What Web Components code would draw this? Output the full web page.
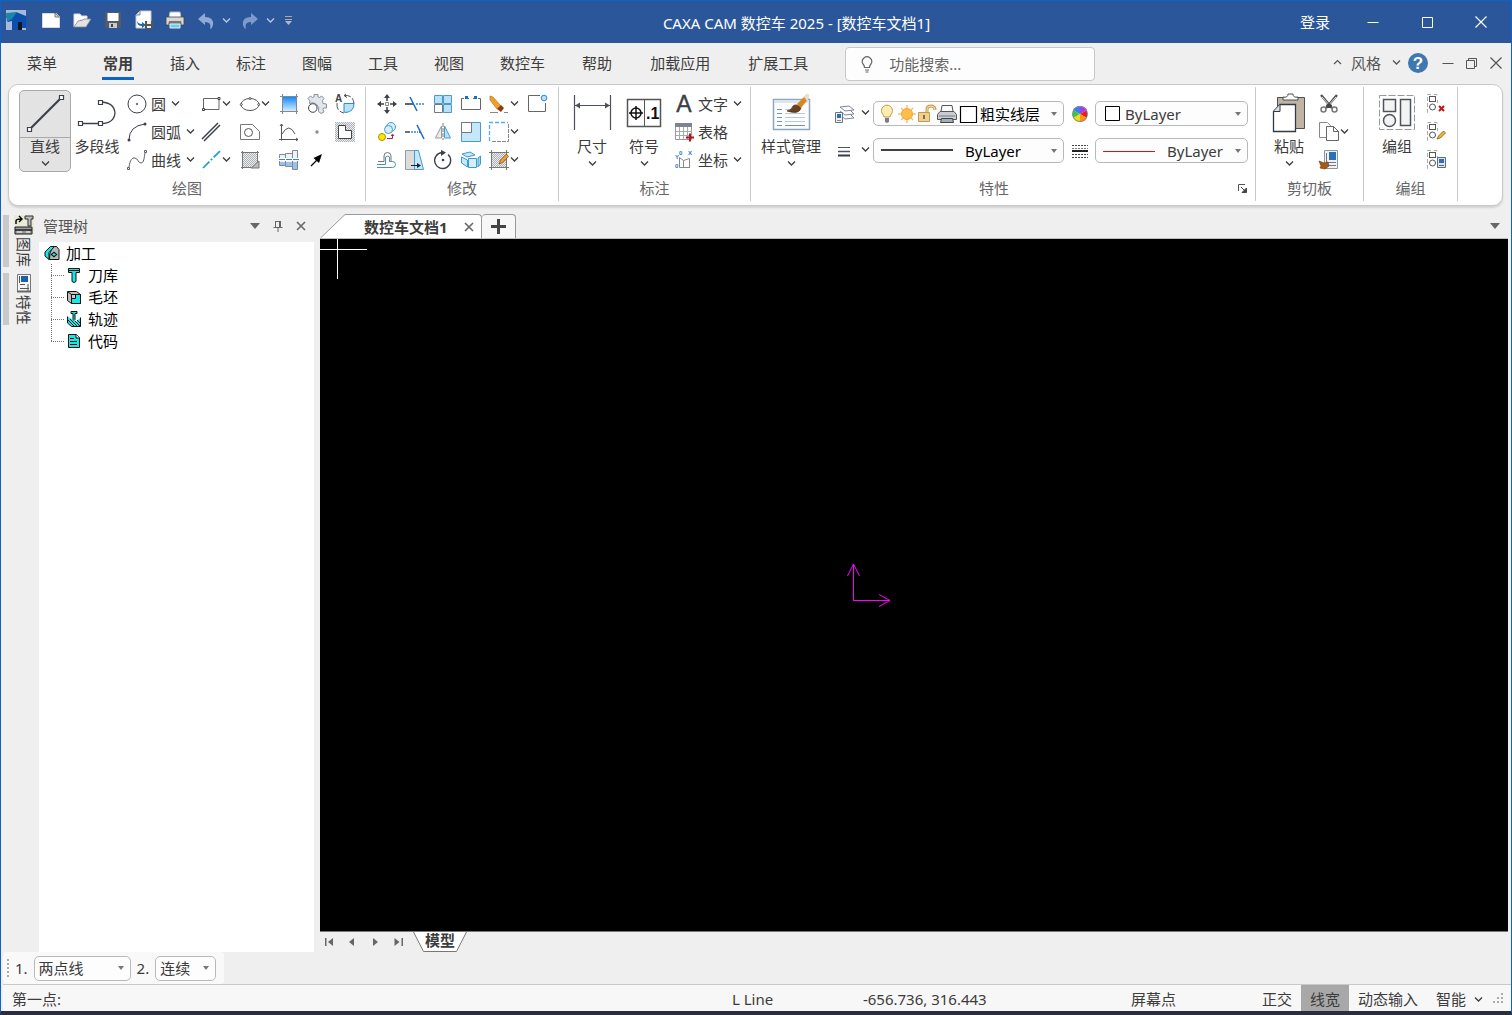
<!DOCTYPE html>
<html lang="zh-CN">
<head>
<meta charset="utf-8">
<title>CAXA CAM 数控车 2025</title>
<style>
    html, body {
        height: 100%;
        margin: 0;
    }

    body {
        font: 15px/20px "Noto Sans", "Noto Sans CJK SC", sans-serif;
        color: #3c3c3c;
        background: #efefef;
        overflow: hidden;
    }
</style>
</head>
<body>
<cam-window>
    <cam-titlebar slot="title" caption="CAXA CAM 数控车 2025 - [数控车文档1]"></cam-titlebar>
    <cam-menubar slot="menu"></cam-menubar>

    <cam-ribbon slot="ribbon">
        <ribbon-group label="绘图" pad="0 2px 0 10px">
            <big-button icon="line" label="直线" drop active></big-button>
            <big-button icon="pline" label="多段线"></big-button>
            <tool-grid after cols="74px 39px 39px 28px 28px 28px">
                <tool-button icon="circle" label="圆" drop></tool-button>
                <tool-button icon="rect" hint="矩形" drop></tool-button>
                <tool-button icon="ellipse" hint="椭圆" drop></tool-button>
                <tool-button icon="gradient" hint="渐变"></tool-button>
                <tool-button icon="gear" hint="齿轮"></tool-button>
                <tool-button icon="detail" hint="局部放大"></tool-button>
                <tool-button icon="arc" label="圆弧" drop></tool-button>
                <tool-button icon="parallel" hint="平行线"></tool-button>
                <tool-button icon="contour" hint="轮廓"></tool-button>
                <tool-button icon="formula" hint="公式曲线"></tool-button>
                <tool-button icon="point" hint="点"></tool-button>
                <tool-button icon="region" hint="区域"></tool-button>
                <tool-button icon="spline" label="曲线" drop></tool-button>
                <tool-button icon="centerline" hint="中心线" drop></tool-button>
                <tool-button icon="hatch" hint="剖面线"></tool-button>
                <tool-button icon="shaft" hint="轴"></tool-button>
                <tool-button icon="arrow" hint="箭头"></tool-button>
            </tool-grid>
        </ribbon-group>

        <ribbon-group label="修改" pad="0 2px 0 11px">
            <tool-grid cols="28px 28px 28px 28px 39px 28px">
                <tool-button icon="move" hint="平移"></tool-button>
                <tool-button icon="trim" hint="裁剪"></tool-button>
                <tool-button icon="array" hint="阵列"></tool-button>
                <tool-button icon="break" hint="打断"></tool-button>
                <tool-button icon="erase" hint="删除" drop></tool-button>
                <tool-button icon="corner" hint="过渡"></tool-button>
                <tool-button icon="copy" hint="平移复制"></tool-button>
                <tool-button icon="extend" hint="延伸"></tool-button>
                <tool-button icon="mirror" hint="镜像"></tool-button>
                <tool-button icon="scale" hint="缩放"></tool-button>
                <tool-button icon="explode" hint="分解" drop></tool-button>
                <span></span>
                <tool-button icon="offset" hint="等距线"></tool-button>
                <tool-button icon="stretch" hint="拉伸"></tool-button>
                <tool-button icon="rotate" hint="旋转"></tool-button>
                <tool-button icon="block" hint="块"></tool-button>
                <tool-button icon="hatchedit" hint="编辑剖面线" drop></tool-button>
            </tool-grid>
        </ribbon-group>

        <ribbon-group label="标注" pad="0 3px 0 7px">
            <big-button icon="dim" label="尺寸" drop></big-button>
            <big-button icon="symbol" label="符号" drop></big-button>
            <tool-grid after cols="73px">
                <tool-button icon="text" label="文字" drop></tool-button>
                <tool-button icon="table" label="表格"></tool-button>
                <tool-button icon="coord" label="坐标" drop></tool-button>
            </tool-grid>
        </ribbon-group>

        <ribbon-group label="特性" pad="0 7px 0 9px" launcher>
            <big-button icon="style" label="样式管理" drop wide></big-button>
            <prop-grid>
                <tool-button icon="layers" hint="图层" drop></tool-button>
                <cam-combo value="粗实线层" hint="图层" dark>
                    <cam-icon name="bulb"></cam-icon><cam-icon name="sun"></cam-icon><cam-icon name="lock"></cam-icon><cam-icon name="printer2"></cam-icon><cam-icon name="swatch"></cam-icon>
                </cam-combo>
                <cam-icon name="wheel"></cam-icon>
                <cam-combo value="ByLayer" hint="颜色"><cam-icon name="swatch2"></cam-icon></cam-combo>
                <tool-button icon="weights" hint="线宽" drop></tool-button>
                <cam-combo value="ByLayer" hint="线宽" dark><cam-icon name="thick"></cam-icon></cam-combo>
                <cam-icon name="linetypes"></cam-icon>
                <cam-combo value="ByLayer" hint="线型"><cam-icon name="thin"></cam-icon></cam-combo>
            </prop-grid>
        </ribbon-group>

        <ribbon-group label="剪切板" pad="0 8px 0 7px">
            <big-button icon="paste" label="粘贴" drop></big-button>
            <tool-grid after cols="36px">
                <tool-button icon="cut" hint="剪切"></tool-button>
                <tool-button icon="copydoc" hint="复制" drop></tool-button>
                <tool-button icon="match" hint="特性匹配"></tool-button>
            </tool-grid>
        </ribbon-group>

        <ribbon-group label="编组" pad="0 10px 0 7px">
            <big-button icon="group" label="编组"></big-button>
            <tool-grid after cols="20px">
                <tool-button icon="ungroup" hint="解除编组"></tool-button>
                <tool-button icon="groupedit" hint="编辑编组"></tool-button>
                <tool-button icon="groupmgr" hint="编组管理"></tool-button>
            </tool-grid>
        </ribbon-group>
    </cam-ribbon>

    <side-tabs slot="side">
        <side-tab icon="library">图库</side-tab>
        <side-tab icon="props">特性</side-tab>
    </side-tabs>

    <dock-panel slot="dock" caption="管理树">
        <tree-node icon="machining" label="加工">
            <tree-node child icon="tool" label="刀库"></tree-node>
            <tree-node child icon="stock" label="毛坯"></tree-node>
            <tree-node child icon="path" label="轨迹"></tree-node>
            <tree-node child last icon="code" label="代码"></tree-node>
        </tree-node>
    </dock-panel>

    <doc-view slot="view" caption="数控车文档1" sheet="模型"></doc-view>
    <command-bar slot="command"></command-bar>
    <status-bar slot="status"></status-bar>
</cam-window>

<script>
// Icon table: name -> [width, height, svg content]
const K = '#3b4049';
const HATCH = '<pattern id="h" width="2" height="2" patternUnits="userSpaceOnUse"><rect width="2" height="2" fill="#eceef0"/><path d="M0 0h1v1H0zM1 1h1v1H1z" fill="#adb0b5"/></pattern>';
const GROUPBASE = `<g fill="none"><path d="M4 .500H.500V18.500H3M7 .500h3v3M10.500 6v3" stroke="#aaa" stroke-dasharray="4 2"/><rect x="2.500" y="2.500" width="6" height="5" stroke="#555"/><circle cx="5.500" cy="13" r="3" stroke="#555"/></g>`;

const ICONS = {
    app: [20, 20, `<path d="M0 0h20v20H0z" fill="#a9b9dc"/><path d="M0 6 10 2l10 4v12h-4v-6h-4v8H6v-9l-4 1z" fill="#0a4fae"/><path d="M0 3 11 2 6 9 1 12z" fill="#1a86a8"/><path d="M12 12h4v8h-4z" fill="#15151c"/>`],
    new: [20, 20, `<path d="M1.500 3.500h14l3 3v11h-17z" fill="#fff" stroke="#d8d8d8"/><path d="M14 3v4h4.500z" fill="#dcdcdc" stroke="#777"/>`],
    open: [20, 20, `<path d="M2 17V4h6l1.500 2H15v4H8z" fill="#fff" stroke="#ddd"/><path d="M2 17 6 11l5-1 1-1h7l-5 8z" fill="#e3e3e3" stroke="#888" stroke-width=".8"/>`],
    save: [20, 20, `<path d="M2 2h16v16H4l-2-2z" fill="#555b66"/><path d="M4.500 3h11v8h-11z" fill="#fff"/><path d="M6 13h8v5H6z" fill="#c9c9c9"/><path d="M8 14h2v3H8z" fill="#444"/>`],
    saveas: [20, 20, `<path d="M2 5 6 1h11v17H2z" fill="#fff" stroke="#c9c9c9"/><path d="M2 5h4V1" fill="#ddd" stroke="#888"/><path d="M3 11q1 3 5 3v-2l4 3-4 3v-2q-5 0-5-5" fill="#2363ab"/><path d="M11 11h8v8h-8z" fill="#555"/><path d="M13 11h4v3h-4zM13 16h4v2h-4z" fill="#eee"/>`],
    print: [20, 20, `<path d="M5 2h10l1 6H4z" fill="#fff" stroke="#bbb"/><path d="M1 7h18v8H1z" fill="#d7d7d7" stroke="#444" stroke-width=".8"/><path d="M4 11h12l1 4H3z" fill="#777"/><path d="M5 14h10v4H5z" fill="#5fd2f5" stroke="#eee"/>`],
    undo: [20, 20, `<path d="m2 9 7-6v4q9 0 8 8-.5 3-3 4 2-7-5-7v3z" fill="#8fa9d4"/>`],
    redo: [20, 20, `<path d="m18 9-7-6v4q-9 0-8 8 .5 3 3 4-2-7 5-7v3z" fill="#7f9ac8"/>`],
    more: [9, 12, `<path d="M1 2.500h7M1 5.500h7" stroke="#a9a9a9" fill="none"/><path d="M1 7h7l-3.500 4z" fill="#b9b9b9"/>`],
    chev: [9, 9, `<path d="m1 2.500 3.500 3.500L8 2.500" fill="none" stroke="currentColor" stroke-width="1.300"/>`],
    chevup: [9, 9, `<path d="M1 6l3.500-3.500L8 6" fill="none" stroke="currentColor" stroke-width="1.200"/>`],
    tri: [6, 4, `<path d="M0 0h6L3 4z" fill="#777"/>`],
    bigtri: [10, 6, `<path d="M0 0h10L5 6z" fill="#666"/>`],
    min: [12, 12, `<path d="M.500 6.500h11" stroke="currentColor"/>`],
    max: [12, 12, `<path d="M1.500 1.500h10v10h-10z" fill="none" stroke="currentColor"/>`],
    close: [12, 12, `<path d="m.500.500 11 11M11.500.500l-11 11" stroke="currentColor" stroke-width="1.200"/>`],
    restore: [12, 12, `<path d="M.500 3.500h8v8h-8zM2.500 3V1.500h8v8H9" fill="none" stroke="currentColor"/>`],
    help: [20, 20, `<circle cx="10" cy="10" r="10" fill="#3f77b0"/><text x="10" y="16" text-anchor="middle" font-family="Liberation Sans" font-weight="bold" font-size="17" fill="#fff">?</text>`],
    hint: [14, 18, `<path d="M4.500 12.500q0-2-1.500-3.500A4.700 4.700 0 1 1 11 9q-1.500 1.500-1.500 3.500zM5 15h4M5.500 17h3" fill="none" stroke="#666" stroke-width="1.200"/>`],
    launcher: [11, 11, `<path d="M1.500 8V1.500H8" fill="none" stroke="#555"/><path d="m4 4 4 4M9.500 5v4.500H5z" stroke="#444" fill="#444"/>`],

    line: [40, 40, `<path d="M5 36 36 5" stroke="${K}" stroke-width="2.200"/><path d="M2.500 34.500h4v4h-4zM34.500 2.500h4v4h-4z" fill="#fff" stroke="${K}" stroke-width="1.200"/>`],
    pline: [40, 40, `<path d="M4 30.500h20q13 0 14-10.500-1-11-15-11" fill="none" stroke="${K}" stroke-width="1.300"/><path d="M1.500 28.500h4v4h-4zM21.500 28.500h4v4h-4zM21.500 7.500h4v4h-4z" fill="#fff" stroke="${K}" stroke-width="1.200"/>`],
    circle: [20, 20, `<circle cx="10" cy="10" r="9" fill="none" stroke="${K}"/><circle cx="10" cy="10" r="1.200" fill="#777"/>`],
    arc: [20, 20, `<path d="M2 18Q2 4 18 2" fill="none" stroke="${K}"/><circle cx="2" cy="18" r="1.500" fill="${K}"/><circle cx="18" cy="2" r="1.500" fill="${K}"/>`],
    spline: [20, 20, `<path d="M2 17C3 10 5 7.500 8 8s3 5 6 5 3-5 4-10" fill="none" stroke="#5a5f66"/><path d="M.500 17.500h2v2h-2zM17.500.500h2v2h-2z" fill="#fff" stroke="#5a5f66"/>`],
    rect: [20, 20, `<path d="M2.500 4.500h15.500v11H2.500z" fill="#fff" stroke="#666"/><path d="M1.500 14.500h2v2h-2zM17 3.500h2v2h-2z" fill="#fff" stroke="${K}"/>`],
    ellipse: [20, 20, `<ellipse cx="10" cy="10.500" rx="9" ry="6" fill="none" stroke="#555"/><g fill="#fff" stroke="#555"><circle cx="10" cy="4.500" r="1"/><circle cx="1.300" cy="10.500" r="1"/><circle cx="18.700" cy="10.500" r="1"/></g>`],
    gradient: [20, 20, `<linearGradient id="g" x2="0" y2="1"><stop stop-color="#1289ff"/><stop offset="1" stop-color="#d5edff"/></linearGradient><path d="M1 2.500h18M1 17.500h18M3.500 0v20M17.500 0v20" stroke="#888"/><path d="M4 3h13v14H4z" fill="url(#g)"/>`],
    gear: [20, 20, `<path d="M1 4.500 3.500 2l2 1.500L7 3V.500h4V3l1.500.500L14.500 2 17 4.500 15.500 6.500l.500 3 3.500.500v4h-3l-.500 1.500 1 2.500-3 1.500-2.500-2A6.500 6.500 0 0 0 2.500 9.500L3 7z" fill="#e1e5ec" stroke="#8a919c"/><circle cx="5.800" cy="14" r="4.300" fill="#fff" stroke="${K}"/>`],
    detail: [20, 20, `<path d="M9 9.500h10q0 8-8 9l-2-.5z" fill="#b9e1f8" stroke="#2d8ccb"/><path d="M9 1.500q9-1 10 8M2 9q-1 8 7 10M9 1.500l2-1.500M9 1.500l3 2" fill="none" stroke="#555" stroke-dasharray="7 2"/><text x="0" y="8" font-family="Liberation Sans" font-weight="bold" font-size="10" fill="${K}">A</text>`],
    parallel: [20, 20, `<path d="M1 17 17 1M3 19 19 3" stroke="${K}" stroke-width="1.500"/>`],
    contour: [20, 20, `<path d="M.500 2.500h12l7 7v8h-19z" fill="#fff" stroke="#777"/><circle cx="8.500" cy="10.500" r="4" fill="none" stroke="#555"/>`],
    formula: [20, 20, `<path d="M2.500 2v16.500M0 17.500h19M1 4l1.500-2L4 4M17 16l2 1.500-2 1.500M3 12q7-12 13 0" fill="none" stroke="#555"/>`],
    point: [20, 20, `<circle cx="10" cy="10" r="1.700" fill="#8c8c8c"/>`],
    region: [20, 20, `${HATCH}<path d="M0 0h20v20H0z" fill="url(#h)"/><path d="M3.500 3.500h7v5h6v8h-13z" fill="#fff" stroke="#444"/>`],
    centerline: [20, 20, `<path d="M2 18 19 1" stroke="#1a9be6" stroke-width="1.700" stroke-dasharray="9 2 2 2"/>`],
    hatch: [20, 20, `${HATCH}<path d="M3 3h14v10l-5 4H3z" fill="url(#h)"/><path d="M1 2.500h18M2.500 1v18M17.500 1v12M1 17.500h10" fill="none" stroke="#777"/><path d="M11 18l8-7v7z" fill="#bbb" stroke="#777"/>`],
    shaft: [20, 20, `<path d="M.500 4.500h6v11h-6zM6.500 3.500h7v13h-7zM13.500.500h5v19h-5z" fill="#eef2f7" stroke="#7e8b9b"/><path d="M1 12h5v3H1zM7 12h6v4H7zM14 12h4v7h-4z" fill="#9dbfea"/><path d="M0 9.500h20" stroke="#fff" stroke-width="3"/><path d="M0 9.500h20" stroke="#3c7edb" stroke-dasharray="6 1"/>`],
    arrow: [20, 20, `<path d="m4 16 7-7" stroke="#000" stroke-width="1.300"/><path d="m15 4-8.500 4L12 13z"/>`],

    move: [20, 20, `<path d="M10 2v5M10 13v5M2 10h5M13 10h5" stroke="${K}" stroke-width="1.500"/><path d="m10 0 3 4H7zM10 20l3-4H7zM0 10l4-3v6zM20 10l-4-3v6z" fill="${K}"/><path d="M8.500 8.500h3v3h-3z" fill="#fff" stroke="#888"/>`],
    trim: [20, 20, `<path d="M0 10h8" stroke="${K}" stroke-width="1.600"/><path d="m5 3 7 14" stroke="#146fd0" stroke-width="1.500"/><path d="M11 10h9" stroke="#2d8ccb" stroke-width="1.500" stroke-dasharray="2 1"/>`],
    array: [20, 20, `<g fill="#b9e1f8" stroke="#4b9acb"><path d="M1.500 1.500h8v8h-8zM10.500 1.500h8v8h-8zM10.500 10.500h8v8h-8z"/></g><path d="M1.500 10.500h8v8h-8z" fill="#fff" stroke="#777"/>`],
    break: [20, 20, `<path d="M3 4.500H.500v11h19v-11H17M7 4.500h1M13 4.500h-1" fill="none" stroke="#666"/><path d="M4 2h3v3H4zM13 2h3v3h-3z" fill="#146fd0"/>`],
    erase: [20, 20, `<path d="m1 2 3 1 8 9-4 3-7-9z" fill="#f0a029" stroke="#a9690d" stroke-width=".6"/><path d="m12 11 3 3-3 4-4-3z" fill="#8d3c17"/><path d="M1 18.500h8M15 18.500h4" stroke="#888"/>`],
    corner: [20, 20, `<path d="M12 1.500H.500v16h17V9" fill="none" stroke="#666"/><circle cx="16" cy="4" r="2.800" fill="#b9e1f8" stroke="#2d8ccb"/>`],
    copy: [20, 20, `<circle cx="14" cy="5" r="4.500" fill="#d6eefc" stroke="#4b9acb"/><circle cx="11.500" cy="7.500" r="4" fill="#d6eefc" stroke="#4b9acb"/><circle cx="5" cy="15" r="3.500" fill="#ffe600" stroke="#a39300"/><path d="M10 16.500h5.500V13M14 14l1.500-2 1.500 2" fill="none" stroke="#a02a3a"/>`],
    extend: [20, 20, `<path d="M0 10h5M14 10h2" stroke="${K}" stroke-width="1.600"/><path d="M6 10h7" stroke="#2d8ccb" stroke-width="1.500" stroke-dasharray="2 1"/><path d="m12 3 7 14" stroke="#146fd0" stroke-width="1.500"/>`],
    mirror: [20, 20, `<path d="M8.500 4v12h-6z" fill="#eee" stroke="#999"/><path d="M11.500 4v12h6z" fill="#b9e1f8" stroke="#4b9acb"/><path d="M10 1v17" stroke="#777" stroke-dasharray="4 1"/>`],
    scale: [20, 20, `<path d="M.500.500h19v19H.500z" fill="#c5e7fa" stroke="#4b9acb"/><path d="M.500.500h10v10H.500z" fill="#fff" stroke="#777"/>`],
    explode: [20, 20, `<path d="M.500 19V.500H19" fill="none" stroke="#4bb0ea" stroke-width="1.300" stroke-dasharray="4 2"/><path d="M19.500 2v17.500H2" fill="none" stroke="#888" stroke-dasharray="4 1"/>`],
    offset: [20, 20, `<path d="M1 11.500h6V6a3.500 3.500 0 0 1 7 0v5.500" fill="none" stroke="#777"/><path d="M0 14.500h8.500V7q2-2 4 0v4.500h3q3 0 3 3t-3 3H0" fill="none" stroke="#4b8fc4"/>`],
    stretch: [20, 20, `<path d="M.500.500h9v19h-9z" fill="#dcdcdc" stroke="#999"/><path d="M9.500.500h4l5 19h-9z" fill="#c5e7fa" stroke="#4b9acb"/><path d="M6 15.500h8" stroke="#222"/><path d="m12 13 4 2.500-4 2.500z" fill="#222"/>`],
    rotate: [20, 20, `<path d="M9 2.500a8 8 0 1 0 6 2" fill="none" stroke="${K}" stroke-width="1.400"/><path d="m8 0 5 2.500L8 6z" fill="${K}"/><circle cx="10" cy="10" r="1.300" fill="${K}"/>`],
    block: [20, 20, `<path d="m1 4 8-2 5 3-8 2zM.500 7l6 3v7l-6-4z" fill="#c5e7fa" stroke="#3b9bd0"/><path d="M7.500 8.500h8v9h-8z" fill="#d6eefc" stroke="#3b9bd0"/><path d="m17 8 2.500-2v8L17 17z" fill="#a5d6f2" stroke="#3b9bd0"/>`],
    hatchedit: [20, 20, `${HATCH}<path d="M3 3h14v14H3z" fill="url(#h)"/><path d="M0 2.500h20M2.500 0v20M17.500 0v20M0 17.500h20" stroke="#777"/><path d="m10 14 1.500-4 6-6 2 2.500-6 6z" fill="#f0a029" stroke="#8d3c17" stroke-width=".7"/>`],

    dim: [40, 40, `<path d="M2.500 2v35M38.500 2v35M3 12.500h35" stroke="#4d525a" stroke-width="1.200"/><path d="m3 12.500 5-3v6zM38 12.500l-5-3v6z" fill="#4d525a"/>`],
    symbol: [40, 40, `<path d="M3.500 6.500h33v27h-33z" fill="#fff" stroke="#555" stroke-width="1.500"/><path d="M20.500 6v28" stroke="#555"/><circle cx="12" cy="20" r="5" fill="none" stroke="#111" stroke-width="1.500"/><path d="M5 20h14M12 13v14" stroke="#111" stroke-width="1.500"/><text x="22" y="26" font-family="Liberation Sans" font-weight="bold" font-size="16" fill="#111">.1</text>`],
    text: [20, 20, `<text x="10" y="18" text-anchor="middle" font-family="Liberation Sans" font-size="23" fill="${K}" stroke="${K}" stroke-width=".4">A</text>`],
    table: [20, 20, `<path d="M1.500 1.500h16v16h-16z" fill="#fff" stroke="#999"/><path d="M1 1h17v4H1z" fill="#7b8490"/><path d="M2 9.500h16M2 13.500h16M5.500 5v12M9.500 5v12M13.500 5v12" stroke="#aaa"/><path d="M12 15.500h8M16 11.500v8" stroke="#b3141d" stroke-width="2"/>`],
    coord: [20, 20, `<path d="M5.500 7.500v10H16M5.500 7.500l4 3v7M9.500 10.500l6-2v9" fill="none" stroke="#888"/><g font-family="Liberation Sans" font-weight="bold" font-size="6" fill="#2277cf"><text x="1" y="9">Y</text><text x="5" y="5">0</text><text x="14" y="5">X</text><text x="1" y="18">0</text></g>`],
    style: [40, 40, `<path d="M2.500 6.500h36v30h-36z" fill="#fbfdff" stroke="#8fa6bb" stroke-width="1.500"/><path d="M3 8.500h35" stroke="#dbe5ee" stroke-width="3"/><path d="M6 16.500h5M6 20.500h5M6 24.500h5M6 28.500h5M6 32.500h5M14 32.500h20" stroke="#7494ad"/><path d="M14 20.500h20M14 24.500h20M14 28.500h20M14 16.500h4" stroke="#bccad6"/><path d="M16 18q5-1 6-5 4-3 8 2-2 7-14 3" fill="#6b4220" stroke="#3d2410" stroke-width=".7"/><path d="M26 11 36 1h2v4l-8 10z" fill="#d98522"/><path d="m33 4 3-3h2v4l-2 3z" fill="#eadfd0"/>`],

    // these two sit in the 27px wide buttons before the combos
    layers: [26, 20, `<path d="m6 3 9-1 5 4-9 1zM6 7l5 4 9-1-3-3M6 11l5 4 9-1-3-3" fill="#fff" stroke="#7d8794"/><path d="M1.500 8.500h7v10h-7z" fill="#eef2f6" stroke="#66768a"/><path d="M3 10h4v4H3z" fill="#2c6fb5"/><path d="M3 16.500h4" stroke="#888"/>`],
    weights: [26, 20, `<path d="M4 6.500h12" stroke="#555"/><path d="M4 10.500h12" stroke="#4a5360" stroke-width="1.500"/><path d="M4 14.500h12" stroke="#333b47" stroke-width="2"/>`],
    bulb: [18, 20, `<path d="M5 13q0-2-2-4A5.500 5.500 0 1 1 13 9q-2 2-2 4z" fill="#fbeeb0" stroke="#c39b3c"/><path d="M6 14h4v4l-2 1-2-1z" fill="#777e88"/>`],
    sun: [20, 20, `<path d="M10 1v18M1 10h18M4 4l12 12M16 4 4 16" stroke="#f2c377" stroke-width="1.500"/><circle cx="10" cy="10" r="5.500" fill="#ffbd4a" stroke="#f0a63a"/>`],
    lock: [20, 20, `<path d="M10 9V5q0-3 4-3t4 4" fill="none" stroke="#c9a04a" stroke-width="3"/><path d="M10 9V5q0-3 4-3t4 4" fill="none" stroke="#f4deb0"/><path d="M1.500 8.500h11v9h-11z" fill="#f0cf91" stroke="#c29b52"/><path d="M6 11h2v4H6z" fill="#8b6f32"/>`],
    printer2: [22, 20, `<path d="M5 1.500h10l1 6H4z" fill="#fafafa" stroke="#555"/><path d="m3 7.500 14 0 2.500 3v5H.500v-5z" fill="#c9cdd2" stroke="#555"/><path d="M2 11h16v2H2z" fill="#9fa5ad"/><path d="M4.500 14.500h11l1 4h-13z" fill="#9fb0bb" stroke="#444"/>`],
    swatch: [21, 20, `<path d="M1.500 2.500h16v16h-16z" fill="#fff" stroke="#000" stroke-width="1.200"/>`],
    swatch2: [16, 20, `<path d="M.500 2.500h14v14h-14z" fill="#fff" stroke="#000"/>`],
    thick: [80, 20, `<path d="M0 9h72" stroke="#3f3f3f" stroke-width="2"/>`],
    thin: [60, 20, `<path d="M0 10.500h52" stroke="#e01010"/>`],
    wheel: [16, 16, `<path d="M8 8V0a8 8 0 0 1 7 4z" fill="#a23cf0"/><path d="m8 8 7-4v8z" fill="#f01818"/><path d="m8 8 7 4a8 8 0 0 1-7 4z" fill="#ff9415"/><path d="M8 8v8a8 8 0 0 1-7-4z" fill="#f4d91b"/><path d="m8 8-7 4V4z" fill="#3cc63c"/><path d="M8 8 1 4a8 8 0 0 1 7-4z" fill="#3f7af5"/><circle cx="8" cy="8" r="7.500" fill="none" stroke="#888"/>`],
    linetypes: [16, 14, `<path d="M0 1.500h16" stroke="#444" stroke-dasharray="2 1"/><path d="M0 4.500h16" stroke="#777" stroke-dasharray="2 1"/><path d="M0 7h16" stroke="#222" stroke-width="2"/><path d="M0 10.500h16M0 13.500h16" stroke="#444" stroke-dasharray="2 1"/>`],

    paste: [40, 40, `<path d="M8.500 4.500h27v31h-27z" fill="#bfb4a3" stroke="#4b4f56"/><path d="M14 7V4q5 1 5-3h5q0 4 5 3v3z" fill="#fff" stroke="#4b4f56"/><path d="M4.500 18.500 11 11.500h15.500v27h-22z" fill="#fff" stroke="#333a44" stroke-width="1.300"/><path d="M4.500 18.500H11v-7" fill="#ddd" stroke="#333a44"/>`],
    cut: [20, 20, `<path d="m2 1 11 13M18 1 7 14" stroke="#555" stroke-width="2.500"/><path d="m3 3 9 10M17 3 8 13" stroke="#ddd"/><path d="m7 11 3-2 3 2-1 3H8z" fill="#444"/><circle cx="4.500" cy="15.500" r="2.500" fill="none" stroke="#777" stroke-width="1.500"/><circle cx="15.500" cy="15.500" r="2.500" fill="none" stroke="#777" stroke-width="1.500"/>`],
    copydoc: [20, 20, `<path d="M.500.500h8l3 3v12H.500z" fill="#fff" stroke="#888"/><path d="M7.500 4.500h7l5 5v9h-12z" fill="#fff" stroke="#666"/><path d="M14.500 4.500v5h5" fill="none" stroke="#666"/>`],
    match: [20, 20, `<path d="M5.500.500h13v18h-13z" fill="#eef2f6" stroke="#8797a8"/><path d="M10 2h7v8h-7z" fill="#2c6fb5"/><path d="M7.500 3v12M8 12.500h9M8 15.500h9" stroke="#777"/><path d="m0 11 5 2 4-1 1 4-4 3-5-1 1-2z" fill="#a85a16" stroke="#6b3508" stroke-width=".6"/>`],
    group: [40, 40, `<path d="M2.500 2.500h35v34h-35z" fill="none" stroke="#999" stroke-dasharray="7 2"/><g fill="#f3f3f3" stroke="#4d535c" stroke-width="1.500"><path d="M6.500 6.500h12v12h-12zM23.500 6.500h10v26h-10z"/><circle cx="12.500" cy="27.500" r="6"/></g>`],
    ungroup: [20, 20, `${GROUPBASE}<path d="m12 12 5 5M17 12l-5 5" stroke="#c01818" stroke-width="2"/>`],
    groupedit: [20, 20, `${GROUPBASE}<path d="m10 17 1.500-3 5-5 2 2-5 5z" fill="#f3b52d" stroke="#6b4c12" stroke-width=".7"/>`],
    groupmgr: [20, 20, `${GROUPBASE}<path d="M10.500 7.500h8v10h-8z" fill="#dce4ec" stroke="#5c6c80"/><path d="M12 9h5v4h-5z" fill="#2c6fb5"/><path d="M12 15.500h5" stroke="#666"/>`],

    library: [20, 20, `<path d="M0 0h20v20H0z" fill="#e9ead6"/><path d="M2 9V6q0-2 5-2M5 1l3 3-3 3" fill="none" stroke="#000" stroke-width="1.400"/><path d="M11 1h8v3h-2v7h-3V4h-3z" fill="#bbb" stroke="#333"/><path d="M1 12h17v3H1zM1 15h17v4H1z" fill="#999" stroke="#222"/><path d="M3 17h5M12 17h4" stroke="#fff"/>`],
    props: [20, 20, `<path d="M3.500 1.500h13v17h-13z" fill="#f4f6f8" stroke="#777"/><path d="M7 3h7v6H7z" fill="#1d5fae"/><path d="M5.500 3v7M6 11.500h5M6 15.500h9M14 11v7" stroke="#555"/><path d="M3 18.500h14" stroke="#666" stroke-width="2"/>`],
    pin: [10, 12, `<path d="M2.500 1v6M3 1.500h5M7.500 1v6M6.500 1v6M.500 7.500h9M5 8v4" fill="none" stroke="#666"/>`],
    machining: [16, 16, `<path d="m6 8 3-6.500h3.500l2.500 3v10H5.500z" fill="#b8b8b8" stroke="#111"/><path d="m1 7 5.500-5.500h4L5 7.500v7L1 11z" fill="#19e6e6" stroke="#111"/><path d="m10 6.500 3.500 3-3.500 3-3.500-3z" fill="#111"/><path d="m10 8 2 1.500-2 1.500-2-1.500z" fill="#19e6e6"/>`],
    tool: [16, 16, `<path d="M2.500 1.500h11v4H10v9l-2 1-2-1v-9H2.500z" fill="#19e6e6" stroke="#111"/><path d="M3 3.500h10" stroke="#111"/>`],
    stock: [16, 16, `<path d="M1.500 2.500h9l4 3v9h-9l-4-3z" fill="#c0c0c0" stroke="#111"/><path d="M5.500 5.500h9v9h-9z" fill="#19e6e6" stroke="#111"/><path d="M2 3l3.500 2.500M5.500 5.500h4v4h-4z" fill="#ccc" stroke="#111"/>`],
    path: [16, 16, `<path d="M1.500 5.500V12l4 3.500h9v-9L10 11z" fill="#19e6e6"/><path d="M1.500 5.500V12l4 3.500h9v-9" fill="none" stroke="#111"/><path d="m2 9 6 6M4 8l7 7M9 10l5 5M11 9l3 3" stroke="#111"/><path d="M5 .500h6v2H9v6l-1 1-1-1v-6H5z" fill="#19e6e6" stroke="#111"/>`],
    code: [16, 16, `<path d="M2.500 1.500h8l3 3v10h-11z" fill="#19e6e6" stroke="#111"/><path d="M10 1v4h3.500" fill="#fff" stroke="#111"/><path d="M4 5.500h4M4 8.500h7M4 11.500h7" stroke="#111"/>`],
    twig: [14, 22, `<path d="M.500 0v22M0 11.500h14" stroke="#777" stroke-dasharray="1 1"/>`],
    twigend: [14, 22, `<path d="M.500 0v12M0 11.500h14" stroke="#777" stroke-dasharray="1 1"/>`],
    x: [10, 10, `<path d="m1 1 8 8M9 1 1 9" stroke="#666" stroke-width="1.600"/>`],
    plus: [15, 15, `<path d="M7.500 0v15M0 7.500h15" stroke="#444" stroke-width="3"/>`],
    slant: [26, 24, `<path d="M0 24 25 .500h1V24z" fill="#fff"/><path d="M.500 24 25 .500h1" fill="none" stroke="#999" stroke-linejoin="bevel"/>`],
    sheetl: [11, 20, `<path d="M0 0 10 19.500h1V0z" fill="#fff"/><path d="m.500 0 10 19.500h1" fill="none" stroke="#777"/>`],
    sheetr: [11, 20, `<path d="M11 0 1 19.500H0V0z" fill="#fff"/><path d="m10.500 0-10 19.500h-1" fill="none" stroke="#777"/>`],
    first: [10, 10, `<path d="M1 1h1.500v8H1zM9 1v8L4 5z" fill="#666"/>`],
    prev: [10, 10, `<path d="M7 1v8L2 5z" fill="#666"/>`],
    next: [10, 10, `<path d="M3 1v8l5-4z" fill="#666"/>`],
    last: [10, 10, `<path d="M8.500 1H10v8H8.500zM1.500 1v8l5-4z" fill="#666"/>`],
    grip: [2, 18, `<path d="M1 0v18" stroke="#aaa" stroke-width="2" stroke-dasharray="2 2"/>`],
    sizer: [12, 12, `<path d="M9 1h2v2H9zM9 5h2v2H9zM9 9h2v2H9zM5 5h2v2H5zM5 9h2v2H5zM1 9h2v2H1z" fill="#aaa"/>`],
    cross: [48, 40, `<path d="M0 10.500h47M17.500 0v40" stroke="#fff"/>`],
    ucs: [46, 46, `<path d="M7.500 38.500v-36M1.500 14l6-12 6 12M7 38.500h37M33 32.500l11 6-11 6" fill="none" stroke="#f0f"/>`]
};

const BASE = `
    *, *::before { box-sizing: border-box; }
    button { font: inherit; color: inherit; background: none; border: 0; padding: 0; margin: 0; }
    button:hover { background-color: rgba(120, 160, 210, .25); }
`;

class CamElement extends HTMLElement {
    constructor() {
        super();
        this.shadow = this.attachShadow({mode: "open"});
    }

    connectedCallback() {
        this.shadow.innerHTML = `<style>${BASE}${this.styles()}</style>${this.render()}`;
    }

    attr(name) {
        return this.getAttribute(name) || "";
    }

    styles() { return ""; }
    render() { return "<slot></slot>"; }
}

const icon = (name) => `<cam-icon name="${name}"></cam-icon>`;

customElements.define("cam-icon", class extends CamElement {
    styles() {
        return `:host { display: block; flex: none; } svg { display: block; overflow: visible; }`;
    }
    render() {
        const [w, h, body] = ICONS[this.attr("name")];
        return `<svg width="${w}" height="${h}" viewBox="0 0 ${w} ${h}" aria-hidden="true">${body}</svg>`;
    }
});

customElements.define("cam-window", class extends CamElement {
    styles() {
        return `
            :host {
                display: flex;
                flex-direction: column;
                height: 100vh;
                border: 1px solid #0a63c6;
                border-bottom: 4px solid #2a2d3e;
                box-sizing: border-box;
            }
            .work { flex: 1; display: flex; min-height: 0; padding: 3px 3px 0 0; }
            ::slotted([slot=view]) { flex: 1; margin-left: 6px; }
        `;
    }
    render() {
        return `
            <slot name="title"></slot>
            <slot name="menu"></slot>
            <slot name="ribbon"></slot>
            <div class="work"><slot name="side"></slot><slot name="dock"></slot><slot name="view"></slot></div>
            <slot name="command"></slot>
            <slot name="status"></slot>
        `;
    }
});

customElements.define("cam-titlebar", class extends CamElement {
    styles() {
        return `
            :host { display: flex; flex: none; height: 42px; align-items: center; background: #2b579a; color: #fff; padding-right: 3px; }
            .quick { display: flex; align-items: center; align-self: flex-start; height: 38px; padding-left: 5px; color: #b9c7e0; }
            .quick button { display: block; }
            .quick .b { margin-left: 11px; }
            .quick .c { margin-left: 6px; }
            .quick .c + .b { margin-left: 9px; }
            .logo { margin-right: 4px; }
            h1 { flex: 1; margin: 0; padding-top: 2px; font-size: 15px; font-weight: normal; text-align: center; }
            .login { margin-right: 16px; }
            .win { width: 54px; height: 42px; display: grid; place-items: center; }
        `;
    }
    render() {
        return `
            <div class="quick">
                <span class="logo">${icon("app")}</span>
                ${["new", "open", "save", "saveas", "print", "undo"].map(n => `<button class="b" aria-label="${n}">${icon(n)}</button>`).join("")}
                <button class="c" aria-label="undo list">${icon("chev")}</button>
                <button class="b" aria-label="redo">${icon("redo")}</button>
                <button class="c" aria-label="redo list">${icon("chev")}</button>
                <button class="b" aria-label="customize">${icon("more")}</button>
            </div>
            <h1>${this.attr("caption")}</h1>
            <button class="login">登录</button>
            ${["min", "max", "close"].map(n => `<button class="win" aria-label="${n}">${icon(n)}</button>`).join("")}
        `;
    }
});

customElements.define("cam-menubar", class extends CamElement {
    styles() {
        return `
            :host { display: flex; flex: none; height: 41px; align-items: center; padding: 0 9px 0 8px; }
            nav { display: flex; padding-bottom: 2px; }
            nav button { padding: 0 18px; height: 36px; }
            nav button:first-child { margin-right: 9px; }
            nav button:nth-child(n+9) { padding: 0 19px; }
            .on { font-weight: bold; }
            .on span { display: block; width: 32px; line-height: 28px; padding-top: 4px; border-bottom: 3px solid #0a63c6; }
            label {
                display: flex; align-items: center; width: 250px; height: 34px; margin-left: 18px; padding-left: 14px;
                background: #fdfdfd; border: 1px solid #c8c8c8; border-radius: 4px;
            }
            input { flex: 1; min-width: 0; border: 0; outline: 0; background: none; font: inherit; margin-left: 15px; padding: 0; }
            input::placeholder { color: #666; opacity: 1; }
            .right { margin-left: auto; display: flex; align-items: center; gap: 7px; color: #555; padding-bottom: 2px; }
            .right .mdi { margin-left: 7px; }
            .right .mdi + .mdi { margin-left: 5px; }
            .skin { display: flex; align-items: center; gap: 11px; margin-left: 2px; }
        `;
    }
    render() {
        const items = ["菜单", "常用", "插入", "标注", "图幅", "工具", "视图", "数控车", "帮助", "加载应用", "扩展工具"];
        return `
            <nav>${items.map(t => t === "常用" ? `<button class="on"><span>${t}</span></button>` : `<button>${t}</button>`).join("")}</nav>
            <label>${icon("hint")}<input type="search" placeholder="功能搜索..." aria-label="功能搜索"></label>
            <div class="right">
                <button aria-label="collapse">${icon("chevup")}</button>
                <button class="skin">风格 ${icon("chev")}</button>
                <button aria-label="help">${icon("help")}</button>
                <button class="mdi" aria-label="min">${icon("min")}</button>
                <button class="mdi" aria-label="restore">${icon("restore")}</button>
                <button class="mdi" aria-label="close">${icon("close")}</button>
            </div>
        `;
    }
});

customElements.define("cam-ribbon", class extends CamElement {
    styles() {
        return `
            :host {
                display: flex; flex: none; height: 122px; margin: 0 8px 0 7px; box-sizing: border-box;
                background: #fff; border: 1px solid #c9c9c9; border-radius: 10px; box-shadow: 0 2px 2px #d2d2d2;
            }
        `;
    }
});

customElements.define("ribbon-group", class extends CamElement {
    styles() {
        return `
            :host { display: flex; flex-direction: column; flex: none; margin: 2px 0 4px; padding-top: 3px; border-right: 1px solid #c9c9c9; }
            .body { display: flex; height: 82px; padding: ${this.attr("pad")}; }
            .foot { display: flex; align-items: center; height: 29px; padding-top: 3px; color: #666; }
            .foot span { flex: 1; text-align: center; }
            .foot button { margin-right: 7px; }
        `;
    }
    render() {
        return `
            <div class="body"><slot></slot></div>
            <div class="foot"><span>${this.attr("label")}</span>${this.hasAttribute("launcher") ? `<button aria-label="特性">${icon("launcher")}</button>` : ""}</div>
        `;
    }
});

customElements.define("big-button", class extends CamElement {
    styles() {
        return `
            :host { display: block; flex: none; min-width: 52px; }
            :host([wide]) { margin-right: 12px; }
            button { display: flex; flex-direction: column; align-items: center; width: 100%; height: 82px; padding-top: 2px; border: 1px solid transparent; border-radius: 5px; }
            .label { line-height: 20px; margin-top: 3px; white-space: nowrap; }
            .drop { margin-top: 3px; }
            :host([active]) button { background: linear-gradient(#a9a9a9, #a9a9a9) 0 46px / 100% 1px no-repeat #e3e3e3; border-color: #a9a9a9; }
        `;
    }
    render() {
        return `<button>${icon(this.attr("icon"))}<span class="label">${this.attr("label")}</span>${this.hasAttribute("drop") ? `<span class="drop">${icon("chev")}</span>` : ""}</button>`;
    }
});

customElements.define("tool-grid", class extends CamElement {
    styles() {
        return `
            :host { display: grid; grid-template-columns: ${this.attr("cols")}; grid-auto-rows: 28px; align-items: center; }
            :host([after]) { margin-left: 4px; }
        `;
    }
});

customElements.define("tool-button", class extends CamElement {
    styles() {
        return `
            :host { display: block; }
            button { display: flex; align-items: center; height: 28px; }
            .label { padding: 0 4px; white-space: nowrap; }
            .drop { margin: 0 0 2px 1px; }
        `;
    }
    render() {
        const label = this.attr("label");
        return `<button aria-label="${label || this.attr("hint")}">${icon(this.attr("icon"))}${label ? `<span class="label">${label}</span>` : ""}${this.hasAttribute("drop") ? `<span class="drop">${icon("chev")}</span>` : ""}</button>`;
    }
});

customElements.define("prop-grid", class extends CamElement {
    styles() {
        return `
            :host { display: grid; grid-template-columns: 39px 191px 31px 153px; grid-auto-rows: 25px; row-gap: 12px; align-items: center; padding-top: 11px; }
            ::slotted(cam-icon) { justify-self: center; }
        `;
    }
});

customElements.define("cam-combo", class extends CamElement {
    styles() {
        return `
            :host { display: flex; align-items: center; height: 25px; box-sizing: border-box; padding: 0 6px 0 4px; background: #fdfdfd; border: 1px solid #b9b9b9; border-radius: 5px; }
            :host([hint]) { padding-left: 7px; }
            :host([dark]) { color: #000; }
            :host([value="粗实线层"]) { padding-left: 5px; }
            select { flex: 1; min-width: 0; height: 23px; appearance: none; border: 0; outline: 0; padding: 0; margin: 0; background: none; font: inherit; color: inherit; }
            ::slotted([name=swatch2]) { margin: 0 4px 0 2px; }
            ::slotted([name=thick]), ::slotted([name=thin]) { margin-right: 4px; }
        `;
    }
    render() {
        return `<slot></slot><select aria-label="${this.attr("hint") || this.attr("value")}"><option>${this.attr("value")}</option></select>${icon("tri")}`;
    }
});

customElements.define("side-tabs", class extends CamElement {
    styles() {
        return `:host { display: flex; flex-direction: column; flex: none; gap: 6px; width: 38px; padding-top: 6px; box-sizing: border-box; }`;
    }
});

customElements.define("side-tab", class extends CamElement {
    styles() {
        return `
            :host { display: block; }
            button { display: flex; flex-direction: column; align-items: center; gap: 2px; height: 52px; width: 34px; margin-left: 2px; padding-left: 2px; border-left: 6px solid #c9c9c9; }
            span { writing-mode: vertical-rl; text-orientation: sideways; white-space: nowrap; }
        `;
    }
    render() {
        return `<button>${icon(this.attr("icon"))}<span><slot></slot></span></button>`;
    }
});

customElements.define("dock-panel", class extends CamElement {
    styles() {
        return `
            :host { display: flex; flex-direction: column; flex: none; width: 275px; }
            header { display: flex; align-items: center; height: 33px; padding: 0 8px 0 4px; color: #555; gap: 13px; }
            h2 { flex: 1; margin: 0; font-size: 15px; font-weight: normal; }
            .tree { flex: 1; background: #fff; }
        `;
    }
    render() {
        return `
            <header><h2>${this.attr("caption")}</h2>
                <button aria-label="menu">${icon("bigtri")}</button>
                <button aria-label="pin">${icon("pin")}</button>
                <button aria-label="close">${icon("x")}</button>
            </header>
            <div class="tree" role="tree"><slot></slot></div>
        `;
    }
});

customElements.define("tree-node", class extends CamElement {
    styles() {
        return `
            :host { display: block; color: #000; }
            .row { display: flex; align-items: center; gap: 5px; height: 22px; padding-left: 5px; }
            .row span:last-child { padding-left: 1px; }
            :host([child]) .row { padding-left: 12px; }
            .twig { margin-right: -4px; }
        `;
    }
    render() {
        const twig = this.hasAttribute("last") ? "twigend" : "twig";
        return `
            <div class="row" role="treeitem">${this.hasAttribute("child") ? `<span class="twig">${icon(twig)}</span>` : ""}${icon(this.attr("icon"))}<span>${this.attr("label")}</span></div>
            <slot></slot>
        `;
    }
});

customElements.define("doc-view", class extends CamElement {
    styles() {
        return `
            :host { display: flex; flex-direction: column; min-width: 0; }
            .tabs { display: flex; align-items: flex-end; height: 30px; padding-top: 5px; border-bottom: 1px solid #c0c0c0; }
            .tabs > * { flex: none; }
            .tab { display: flex; align-items: center; gap: 16px; height: 24px; padding: 0 7px 0 18px; background: #fff; border: 1px solid #999; border-width: 1px 1px 0 0; border-radius: 0 4px 0 0; font-weight: bold; }
            .add { display: grid; place-items: center; width: 34px; height: 24px; background: #f7f7f7; border: 1px solid #999; border-width: 1px 1px 0 0; border-radius: 4px 4px 0 0; }
            .list { margin: 0 8px 9px auto; }
            .canvas { flex: 1; position: relative; background: #000; overflow: hidden; }
            .canvas .cursor { position: absolute; left: 0; top: 0; }
            .canvas .ucs { position: absolute; left: 526px; top: 323px; }
            .sheets { display: flex; height: 21px; padding-left: 4px; border-top: 1px solid #777; }
            .sheets .nav { display: flex; align-items: center; gap: 13px; margin-right: 10px; }
            .sheet { display: flex; }
            .sheet b { line-height: 17px; height: 20px; background: #fff; border-bottom: 1px solid #777; padding: 0 1px; }
        `;
    }
    render() {
        return `
            <div class="tabs">
                ${icon("slant")}<div class="tab"><span>${this.attr("caption")}</span><button aria-label="close">${icon("x")}</button></div>
                <button class="add" aria-label="new">${icon("plus")}</button>
                <button class="list" aria-label="list">${icon("bigtri")}</button>
            </div>
            <div class="canvas"><span class="cursor">${icon("cross")}</span><span class="ucs">${icon("ucs")}</span></div>
            <div class="sheets">
                <div class="nav">${["first", "prev", "next", "last"].map(n => `<button aria-label="${n}">${icon(n)}</button>`).join("")}</div>
                <button class="sheet">${icon("sheetl")}<b>${this.attr("sheet")}</b>${icon("sheetr")}</button>
            </div>
        `;
    }
});

customElements.define("command-bar", class extends CamElement {
    styles() {
        return `
            :host { display: flex; flex: none; }
            form { display: flex; align-items: center; height: 32px; margin-left: 2px; padding: 0 8px 0 4px; background: #f9f9f9; border-radius: 4px; }
            span { margin: 0 6px; }
            .line { width: 97px; }
            .mode { width: 61px; }
        `;
    }
    render() {
        return `
            <form>${icon("grip")}
                <span>1.</span><cam-combo class="line" value="两点线"></cam-combo>
                <span>2.</span><cam-combo class="mode" value="连续"></cam-combo>
            </form>
        `;
    }
});

customElements.define("status-bar", class extends CamElement {
    styles() {
        return `
            :host { display: flex; flex: none; align-items: center; height: 27px; margin-left: 2px; border-top: 1px solid #c9c9c9; background: #f7f7f7; padding: 0 7px 0 9px; box-sizing: border-box; }
            span { padding-top: 2px; }
            .prompt { flex: 1; }
            .cmd { width: 131px; }
            .pos { width: 268px; }
            .snap { width: 122px; }
            button { height: 26px; padding: 2px 9px 0; }
            .on { background: #a8a8a8; }
            .smart { display: flex; align-items: center; gap: 8px; }
        `;
    }
    render() {
        return `
            <span class="prompt">第一点:</span>
            <span class="cmd">L Line</span>
            <span class="pos">-656.736, 316.443</span>
            <span class="snap">屏幕点</span>
            <button>正交</button><button class="on" aria-pressed="true">线宽</button><button>动态输入</button>
            <button class="smart">智能 ${icon("chev")}</button>
            ${icon("sizer")}
        `;
    }
});
</script>
</body>
</html>
